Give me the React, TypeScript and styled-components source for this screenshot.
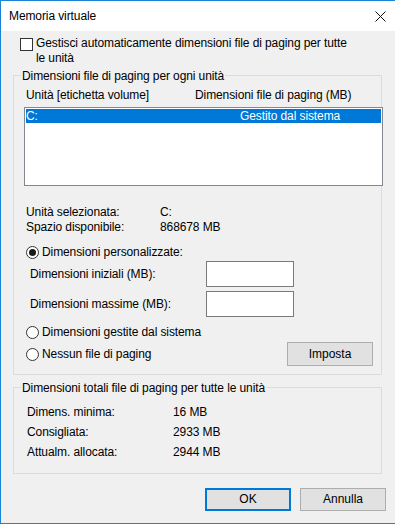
import React from 'react'
import styled, { createGlobalStyle } from 'styled-components'

const GlobalStyle = createGlobalStyle`
  html, body {
    margin: 0;
    padding: 0;
    background: #f0f0f0;
  }
  body {
    font-family: 'Liberation Sans', Arial, sans-serif;
    font-size: 12px;
    line-height: 15px;
    letter-spacing: -0.1px;
    color: #000;
  }
  * {
    box-sizing: border-box;
  }
`

const Window = styled.div`
  width: 395px;
  height: 524px;
  display: flex;
  flex-direction: column;
  background: #f0f0f0;
  border-top: 1px solid #1883d7;
  border-left: 1px solid #1883d7;
  border-bottom: 1px solid #1883d7;
`

const TitleBar = styled.div`
  height: 30px;
  flex: none;
  display: flex;
  align-items: center;
  justify-content: space-between;
  padding: 0 9px 0 8px;
  background: #fff;
`

const Body = styled.div`
  flex: 1;
  display: flex;
  flex-direction: column;
  padding-top: 5px;
`

const CheckRow = styled.label`
  display: flex;
  align-items: flex-start;
  padding-left: 19px;
`

const CheckBox = styled.span`
  flex: none;
  width: 13px;
  height: 13px;
  margin: 2px 3px 0 0;
  border: 1px solid #333;
  background: #fff;
`

const Group = styled.fieldset<{ $mt: number; $pb: number }>`
  margin: ${p => p.$mt}px 0 0 12px;
  width: 369px;
  min-width: 0;
  padding: 0 0 ${p => p.$pb}px 0;
  border: 1px solid #dcdcdc;
`

const Legend = styled.legend`
  margin-left: 7px;
  padding: 3px 1px 0;
  line-height: 15px;
`

const ColumnHeader = styled.div`
  display: grid;
  grid-template-columns: 169px auto;
  margin-top: 4px;
  padding-left: 12px;
`

const ListBox = styled.div`
  width: 359px;
  height: 79px;
  margin: 4px 0 0 10px;
  padding: 1px;
  border: 1px solid #828790;
  background: #fff;
`

const ListRow = styled.div<{ $selected?: boolean }>`
  display: grid;
  grid-template-columns: 214px auto;
  height: 14px;
  line-height: 14px;
  background: ${p => (p.$selected ? '#0078d7' : 'transparent')};
  color: ${p => (p.$selected ? '#fff' : '#000')};
`

const InfoGrid = styled.div<{ $col: number; $pl: number; $mt: number; $lh: number }>`
  display: grid;
  grid-template-columns: ${p => p.$col}px auto;
  margin-top: ${p => p.$mt}px;
  padding-left: ${p => p.$pl}px;
  line-height: ${p => p.$lh}px;
`

const RadioRow = styled.label<{ $mt: number }>`
  display: flex;
  align-items: center;
  height: 15px;
  margin-top: ${p => p.$mt}px;
  padding-left: 12px;
`

const RadioCircle = styled.span<{ $checked?: boolean }>`
  flex: none;
  width: 13px;
  height: 13px;
  margin-right: 3px;
  border: 1px solid #333;
  border-radius: 50%;
  background: #fff;
  display: flex;
  align-items: center;
  justify-content: center;

  &::after {
    content: '';
    display: ${p => (p.$checked ? 'block' : 'none')};
    width: 7px;
    height: 7px;
    border-radius: 50%;
    background: #1a1a1a;
  }
`

const SizeRow = styled.div<{ $mt: number }>`
  display: flex;
  align-items: center;
  margin-top: ${p => p.$mt}px;
  padding-left: 16px;
`

const SizeLabel = styled.span`
  width: 176px;
`

const TextBox = styled.div`
  width: 88px;
  height: 26px;
  border: 1px solid #7a7a7a;
  background: #fff;
`

const ActionRow = styled.div`
  display: flex;
  align-items: center;
  justify-content: space-between;
  height: 24px;
  margin-top: 2px;
  padding-right: 8px;
`

const Button = styled.button<{ $default?: boolean; $h: number }>`
  width: 86px;
  height: ${p => p.$h}px;
  padding: 0;
  font: inherit;
  color: #000;
  background: #e1e1e1;
  border: ${p => (p.$default ? '2px solid #0078d7' : '1px solid #adadad')};
`

const Footer = styled.div`
  display: flex;
  justify-content: flex-end;
  gap: 9px;
  margin-top: 14px;
  padding-right: 9px;
`

const CloseIcon = () => (
  <svg width="11" height="11" viewBox="0 0 11 11">
    <path d="M0.5 0.5 L10.5 10.5 M10.5 0.5 L0.5 10.5" stroke="#111" strokeWidth="1" />
  </svg>
)

export default function App() {
  return (
    <Window>
      <GlobalStyle />
      <TitleBar>
        <span>Memoria virtuale</span>
        <CloseIcon />
      </TitleBar>
      <Body>
        <CheckRow>
          <CheckBox />
          <span>
            Gestisci automaticamente dimensioni file di paging per tutte
            <br />
            le unità
          </span>
        </CheckRow>

        <Group $mt={0} $pb={8}>
          <Legend>Dimensioni file di paging per ogni unità</Legend>
          <ColumnHeader>
            <span>Unità [etichetta volume]</span>
            <span>Dimensioni file di paging (MB)</span>
          </ColumnHeader>
          <ListBox>
            <ListRow $selected>
              <span>C:</span>
              <span>Gestito dal sistema</span>
            </ListRow>
          </ListBox>
          <InfoGrid $col={134} $pl={12} $mt={19} $lh={15}>
            <span>Unità selezionata:</span>
            <span>C:</span>
            <span>Spazio disponibile:</span>
            <span>868678 MB</span>
          </InfoGrid>
          <RadioRow $mt={10}>
            <RadioCircle $checked />
            Dimensioni personalizzate:
          </RadioRow>
          <SizeRow $mt={1}>
            <SizeLabel>Dimensioni iniziali (MB):</SizeLabel>
            <TextBox />
          </SizeRow>
          <SizeRow $mt={4}>
            <SizeLabel>Dimensioni massime (MB):</SizeLabel>
            <TextBox />
          </SizeRow>
          <RadioRow $mt={8}>
            <RadioCircle />
            Dimensioni gestite dal sistema
          </RadioRow>
          <ActionRow>
            <RadioRow $mt={0}>
              <RadioCircle />
              Nessun file di paging
            </RadioRow>
            <Button $h={24}>Imposta</Button>
          </ActionRow>
        </Group>

        <Group $mt={3} $pb={11}>
          <Legend>Dimensioni totali file di paging per tutte le unità</Legend>
          <InfoGrid $col={146} $pl={13} $mt={6} $lh={20}>
            <span>Dimens. minima:</span>
            <span>16 MB</span>
            <span>Consigliata:</span>
            <span>2933 MB</span>
            <span>Attualm. allocata:</span>
            <span>2944 MB</span>
          </InfoGrid>
        </Group>

        <Footer>
          <Button $default $h={23}>OK</Button>
          <Button $h={23}>Annulla</Button>
        </Footer>
      </Body>
    </Window>
  )
}
